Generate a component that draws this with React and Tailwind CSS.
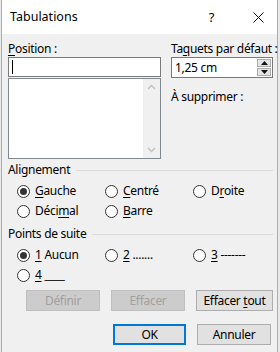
import React from 'react';

const font = { fontFamily: '"Noto Sans", "Open Sans", sans-serif' };

const Radio = ({ checked, children, className = '' }) => (
    <div className={`flex items-center gap-[5px] h-[20px] ${className}`}>
        <span className="w-[13px] h-[13px] rounded-full border border-[#333] bg-white flex items-center justify-center shrink-0">
            {checked && <span className="w-[7px] h-[7px] rounded-full bg-[#333]" />}
        </span>
        <span>{children}</span>
    </div>
);

const U = ({ children }) => <span className="underline underline-offset-2">{children}</span>;

const Group = ({ title }) => (
    <div className="flex items-center gap-[6px] h-[16px]">
        <span>{title}</span>
        <div className="flex-1 h-px bg-[#dcdcdc] mt-[1px]" />
    </div>
);

const Button = ({ children, disabled, primary, className = '' }) => (
    <div
        className={`h-[21px] flex items-center justify-center ${className} ${
            disabled
                ? 'bg-[#cccccc] border border-[#bfbfbf] text-[#a0a0a0]'
                : primary
                ? 'bg-[#e1e1e1] border-2 border-[#0078d7]'
                : 'bg-[#e1e1e1] border border-[#adadad]'
        }`}
    >
        <span>{children}</span>
    </div>
);

const App = () => {
    return (
        <div className="w-[280px] h-[352px] bg-[#e9e9e9] flex text-[12px] tracking-[-0.3px] text-black leading-[16px]" style={font}>
            <div className="w-[277px] h-full ml-px border-x border-[#eea33a] flex flex-col">
                {/* title bar */}
                <div className="h-[34px] bg-white flex items-center pl-[8px] shrink-0">
                    <span className="text-[12.5px] tracking-normal">Tabulations</span>
                    <span className="ml-[131px] text-[13px]">?</span>
                    <svg className="ml-[39px]" width="11" height="11" viewBox="0 0 11 11">
                        <path d="M0.5 0.5 L10.5 10.5 M10.5 0.5 L0.5 10.5" stroke="#111" strokeWidth="1" />
                    </svg>
                </div>

                <div className="flex-1 bg-[#f0f0f0] pl-[6px] pr-[4px]">
                    {/* top */}
                    <div className="flex gap-[10px] mt-[7px]">
                        <div className="w-[153px] flex flex-col">
                            <div className="h-[16px]"><U>P</U>osition :</div>
                            <div className="h-[20px] bg-white border border-[#7a7a7a] flex items-center pl-[3px]">
                                <span className="w-px h-[14px] bg-black" />
                            </div>
                            <div className="mt-px h-[81px] bg-white border border-[#828790] flex justify-end">
                                <div className="w-[17px] bg-[#f0f0f0] flex flex-col justify-between items-center py-[5px]">
                                    <svg width="9" height="6" viewBox="0 0 9 6">
                                        <path d="M1 5 L4.5 1.5 L8 5" fill="none" stroke="#c2c2c2" strokeWidth="1.5" />
                                    </svg>
                                    <svg width="9" height="6" viewBox="0 0 9 6">
                                        <path d="M1 1 L4.5 4.5 L8 1" fill="none" stroke="#c2c2c2" strokeWidth="1.5" />
                                    </svg>
                                </div>
                            </div>
                        </div>
                        <div className="w-[102px] flex flex-col">
                            <div className="h-[16px] whitespace-nowrap">Ta<U>q</U>uets par défaut :</div>
                            <div className="h-[21px] bg-white border border-[#7a7a7a] flex items-center pl-[3px]">
                                <span className="flex-1">1,25 cm</span>
                                <div className="w-[16px] h-full flex flex-col gap-px p-px">
                                    <div className="flex-1 bg-[#e5e5e5] border border-[#acacac] flex items-center justify-center">
                                        <svg width="7" height="4" viewBox="0 0 7 4"><path d="M0 4 L3.5 0 L7 4 Z" fill="#111" /></svg>
                                    </div>
                                    <div className="flex-1 bg-[#e5e5e5] border border-[#acacac] flex items-center justify-center">
                                        <svg width="7" height="4" viewBox="0 0 7 4"><path d="M0 0 L3.5 4 L7 0 Z" fill="#111" /></svg>
                                    </div>
                                </div>
                            </div>
                            <div className="mt-[11px]">À supprimer :</div>
                        </div>
                    </div>

                    {/* alignement */}
                    <div className="mt-[3px]">
                        <Group title="Alignement" />
                        <div className="mt-[3px] ml-[9px] grid grid-cols-[88px_88px_80px]">
                            <Radio checked><U>G</U>auche</Radio>
                            <Radio><U>C</U>entré</Radio>
                            <Radio>D<U>r</U>oite</Radio>
                            <Radio>Déci<U>m</U>al</Radio>
                            <Radio><U>B</U>arre</Radio>
                        </div>
                    </div>

                    {/* points de suite */}
                    <div className="mt-[5px]">
                        <Group title="Points de suite" />
                        <div className="mt-[3px] ml-[9px] grid grid-cols-[88px_88px_80px]">
                            <Radio checked><U>1</U> Aucun</Radio>
                            <Radio><U>2</U> .......</Radio>
                            <Radio><U>3</U> -------</Radio>
                            <Radio><U>4</U> ____</Radio>
                        </div>
                    </div>

                    {/* buttons */}
                    <div className="mt-[5px] ml-[18px] flex gap-[11px]">
                        <Button disabled className="w-[74px]">Définir</Button>
                        <Button disabled className="w-[74px]">Effacer</Button>
                        <Button className="w-[77px]">Effacer <U>t</U>out</Button>
                    </div>
                    <div className="mt-[13px] ml-[105px] flex gap-[11px]">
                        <Button primary className="w-[73px]">OK</Button>
                        <Button className="w-[74px]">Annuler</Button>
                    </div>
                </div>
            </div>
        </div>
    );
};

export default App;
